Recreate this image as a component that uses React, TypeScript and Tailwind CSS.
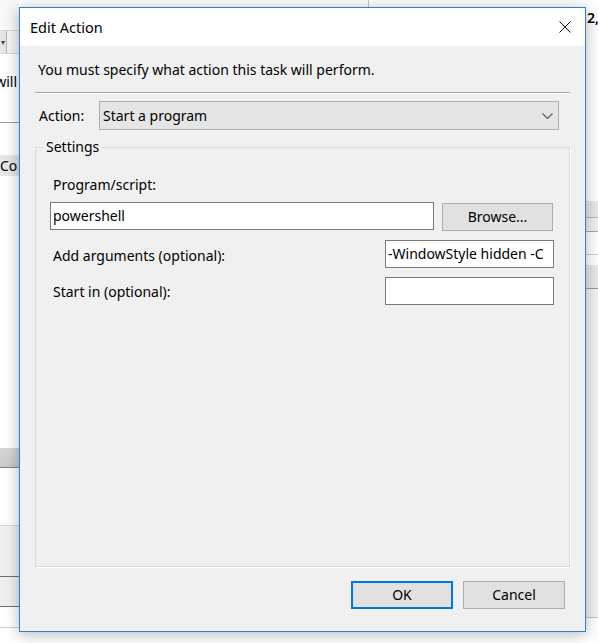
const font = "font-['Segoe_UI','Noto_Sans',sans-serif]";

function CloseIcon() {
  return (
    <svg width="12" height="12" viewBox="0 0 12 12" className="block">
      <path d="M0.5 0.5L11.5 11.5M11.5 0.5L0.5 11.5" stroke="#111" strokeWidth="1" fill="none" />
    </svg>
  );
}

function ChevronDown() {
  return (
    <svg width="11" height="6" viewBox="0 0 11 6" className="block">
      <path d="M0.5 0.5L5.5 5.5L10.5 0.5" stroke="#5a5a5a" strokeWidth="1.1" fill="none" />
    </svg>
  );
}

function TextBox({ value, className }: { value?: string; className: string }) {
  return (
    <div
      className={`flex h-[28px] items-center overflow-hidden whitespace-nowrap border border-[#7a7a7a] bg-white pl-[2px] ${className}`}
    >
      {value}
    </div>
  );
}

function Button({ label, primary }: { label: string; primary?: boolean }) {
  return (
    <button
      className={`flex h-[28px] w-[102px] items-center justify-center bg-[#e1e1e1] ${
        primary ? 'border-2 border-[#0078d7]' : 'border border-[#adadad]'
      }`}
    >
      {label}
    </button>
  );
}

// the task scheduler window peeking out behind the dialog
function Backdrop() {
  return (
    <div className="flex h-full w-full">
      <div className="flex w-[19px] flex-col">
        <div className="h-[30px] bg-[#f8f8f8]" />
        <div className="flex h-[24px] border-y border-[#d9d9d9] bg-[#f4f4f4]">
          <div className="flex w-[7px] items-center justify-center border-r border-[#b4b4b4] bg-[#e6e6e6] text-[8px] leading-none text-[#444]">
            ▾
          </div>
        </div>
        <div className="flex h-[68px] justify-end overflow-hidden whitespace-nowrap pr-[2px] pt-[18px]">will</div>
        <div className="h-[33px] border-t border-[#a0a0a0]" />
        <div className="h-[21px] overflow-hidden whitespace-nowrap bg-[#e6e6e6] pt-px">Co</div>
        <div className="h-[272px]" />
        <div className="h-[20px] border-b border-[#808080] bg-gradient-to-b from-[#d8d8d8] to-[#c9c9c9]" />
        <div className="h-[58px] border-b border-[#d6d6d6]" />
        <div className="h-[51px] border-b border-[#707070] bg-[#f0f0f0]" />
        <div className="h-[30px] border-b border-[#707070] bg-[#f0f0f0]" />
        <div className="h-[21px] border-b border-[#d0d0d0]" />
        <div className="flex-1" />
      </div>

      <div className="flex-1">
        <div className="ml-[349px] h-[7px] w-px bg-[#c8c8c8]" />
      </div>

      <div className="flex w-[12px] flex-col">
        <div className="h-[201px] overflow-hidden whitespace-nowrap pl-px pt-[8px] font-semibold">2,</div>
        <div className="h-[17px] border-b border-[#b8b8b8] bg-[#e8e8e8]" />
        <div className="h-[14px] border-b border-[#a8a8a8] bg-[#f0f0f0]" />
        <div className="h-[23px] border-b border-[#d0d0d0]" />
        <div className="h-[10px]" />
        <div className="h-[24px] border-b border-[#9a9a9a] bg-[#e8e8e8]" />
        <div className="h-[329px] border-b border-[#c4c4c4] bg-[#f2f2f2]" />
        <div className="flex-1" />
      </div>
    </div>
  );
}

function EditActionDialog() {
  return (
    <div className="absolute left-[19px] top-[7px] flex h-[625px] w-[567px] flex-col border border-[#2d7fcf] bg-[#f0f0f0] shadow-[0_2px_14px_rgba(0,0,0,0.3)]">
      <div className="flex h-[38px] items-center justify-between bg-white pl-[10px] pr-[14px]">
        <span className="text-[14.5px]">Edit Action</span>
        <CloseIcon />
      </div>

      <div className="flex flex-1 flex-col">
        <p className="pl-[18px] pt-[14px]">You must specify what action this task will perform.</p>
        <div className="ml-[15px] mr-[15px] mt-[12px] border-y border-t-[#a0a0a0] border-b-white" />

        <div className="mt-[7px] flex items-center pl-[19px]">
          <span className="w-[60px]">Action:</span>
          <div className="flex h-[29px] w-[460px] items-center justify-between border border-[#adadad] bg-[#e5e5e5] pl-[3px] pr-[5px]">
            <span>Start a program</span>
            <ChevronDown />
          </div>
        </div>

        <fieldset className="ml-[15px] mr-[15px] mt-[7px] flex-1 border border-[#dcdcdc] shadow-[1px_1px_0_#fff]">
          <legend className="ml-[8px] px-[2px]">Settings</legend>
          <div className="flex flex-col pl-[14px] pr-[15px] pt-[18px]">
            <span className="ml-[3px]">Program/script:</span>
            <div className="mt-[7px] flex items-start gap-[8px]">
              <TextBox value="powershell" className="w-[384px]" />
              <button className="mt-px flex h-[28px] w-[111px] items-center justify-center border border-[#adadad] bg-[#e1e1e1]">
                Browse...
              </button>
            </div>
            <div className="mt-[9px] flex items-start justify-between">
              <span className="ml-[3px] mt-[6px]">Add arguments (optional):</span>
              <TextBox value="-WindowStyle hidden -C" className="w-[169px]" />
            </div>
            <div className="mt-[9px] flex items-start justify-between">
              <span className="ml-[3px] mt-[5px]">Start in (optional):</span>
              <TextBox className="w-[169px]" />
            </div>
          </div>
        </fieldset>

        <div className="mb-[22px] mt-[14px] flex justify-end gap-[10px] pr-[20px]">
          <Button label="OK" primary />
          <Button label="Cancel" />
        </div>
      </div>
    </div>
  );
}

export default function App() {
  return (
    <div className={`relative h-[643px] w-[598px] overflow-hidden bg-white text-[14px] leading-[20px] text-black ${font}`}>
      <Backdrop />
      <EditActionDialog />
    </div>
  );
}
